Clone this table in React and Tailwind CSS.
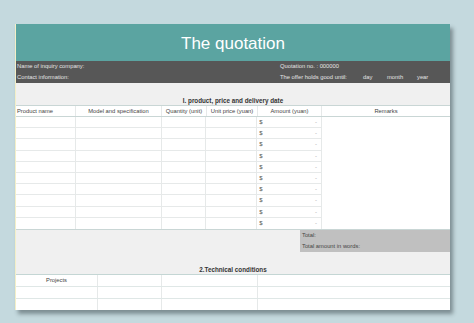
import React from "react";

const font = { fontFamily: '"Liberation Sans", Arial, sans-serif' };

function BodyRow({ last }) {
  return (
    <div className={`flex h-[11.2px] ${last ? "" : "border-b border-[#e6e9e9]"}`}>
      <div className="w-[60px] border-r border-[#e6e9e9]" />
      <div className="w-[86px] border-r border-[#e6e9e9]" />
      <div className="w-[45px] border-r border-[#e6e9e9]" />
      <div className="w-[51px] border-r border-[#e6e9e9]" />
      <div className="w-[64px] flex items-center justify-between pl-[2px] pr-[4px] text-[6px] leading-none">
        <span className="text-[#555]">$</span>
        <span className="text-[#aaa]">-</span>
      </div>
    </div>
  );
}

export default function App() {
  const rows = Array.from({ length: 10 });
  return (
    <div className="w-[474px] h-[323px] bg-[#c4d9de] pl-[15px] pt-[24px] overflow-hidden" style={font}>
      <div className="w-[435px] h-[286px] bg-white flex flex-col shadow-[3px_4px_4px_rgba(40,50,55,0.45)] border-l border-[#f3efc8]">
        {/* Title */}
        <div className="h-[37px] bg-[#5ba4a1] flex items-center justify-center pt-[1px]">
          <span className="text-white text-[17px] leading-none">The quotation</span>
        </div>
        {/* Dark info bar */}
        <div className="h-[22px] bg-[#575757] text-[#e4e4e4] text-[5.8px] leading-none flex flex-col justify-center gap-[5px] pl-[1px]">
          <div className="flex">
            <span className="w-[263px]">Name of inquiry company:</span>
            <span>Quotation no. : 000000</span>
          </div>
          <div className="flex">
            <span className="w-[263px]">Contact information:</span>
            <span className="w-[83px]">The offer holds good until:</span>
            <span className="w-[24px]">day</span>
            <span className="w-[30px]">month</span>
            <span>year</span>
          </div>
        </div>
        {/* Section 1 title */}
        <div className="h-[23px] bg-[#f0f0f0] flex items-end justify-center pb-[1px] border-b border-[#c9d6d5]">
          <span className="text-[#333] text-[6.3px] font-bold leading-none">I. product, price and delivery date</span>
        </div>
        {/* Header row */}
        <div className="flex h-[11px] border-b border-[#c9d6d5] text-[#444] text-[5.8px] leading-none items-center">
          <div className="w-[60px] h-full flex items-center pl-[1px] pt-[1px] border-r border-[#e6e9e9]">Product name</div>
          <div className="w-[86px] h-full flex items-center justify-center pt-[1px] border-r border-[#e6e9e9]">Model and specification</div>
          <div className="w-[45px] h-full flex items-center justify-center pt-[1px] border-r border-[#e6e9e9]">Quantity (unit)</div>
          <div className="w-[51px] h-full flex items-center justify-center pt-[1px] border-r border-[#e6e9e9]">Unit price (yuan)</div>
          <div className="w-[64px] h-full flex items-center justify-center pt-[1px] border-r border-[#e6e9e9]">Amount (yuan)</div>
          <div className="flex-1 h-full flex items-center justify-center pt-[1px]">Remarks</div>
        </div>
        {/* Body */}
        <div className="flex border-b border-[#c9d6d5]">
          <div className="w-[306px] flex flex-col border-r border-[#e6e9e9]">
            {rows.map((_, i) => (
              <BodyRow key={i} last={i === rows.length - 1} />
            ))}
          </div>
          <div className="flex-1" />
        </div>
        {/* Totals / section 2 */}
        <div className="h-[45px] bg-[#f0f0f0] flex flex-col border-b border-[#c4d6d4]">
          <div className="flex justify-end">
            <div className="w-[150px] h-[22px] bg-[#c0c0c0] flex flex-col justify-center gap-[6px] pl-[2px] pt-[1px] text-[#444] text-[5.8px] leading-none">
              <span>Total:</span>
              <span>Total amount in words:</span>
            </div>
          </div>
          <div className="flex-1 flex items-end justify-center pb-[1px]">
            <span className="text-[#333] text-[6.3px] font-bold leading-none">2.Technical conditions</span>
          </div>
        </div>
        {/* Projects table */}
        <div className="flex-1 flex flex-col">
          {[0, 1, 2].map((i) => (
            <div key={i} className={`flex flex-1 ${i < 2 ? "border-b border-[#dfe7e6]" : ""}`}>
              <div className="w-[82px] border-r border-[#e6e9e9] flex items-center justify-center text-[#444] text-[5.8px] leading-none">
                {i === 0 ? "Projects" : ""}
              </div>
              <div className="w-[64px] border-r border-[#e6e9e9]" />
              <div className="w-[96px] border-r border-[#e6e9e9]" />
              <div className="flex-1" />
            </div>
          ))}
        </div>
      </div>
    </div>
  );
}
